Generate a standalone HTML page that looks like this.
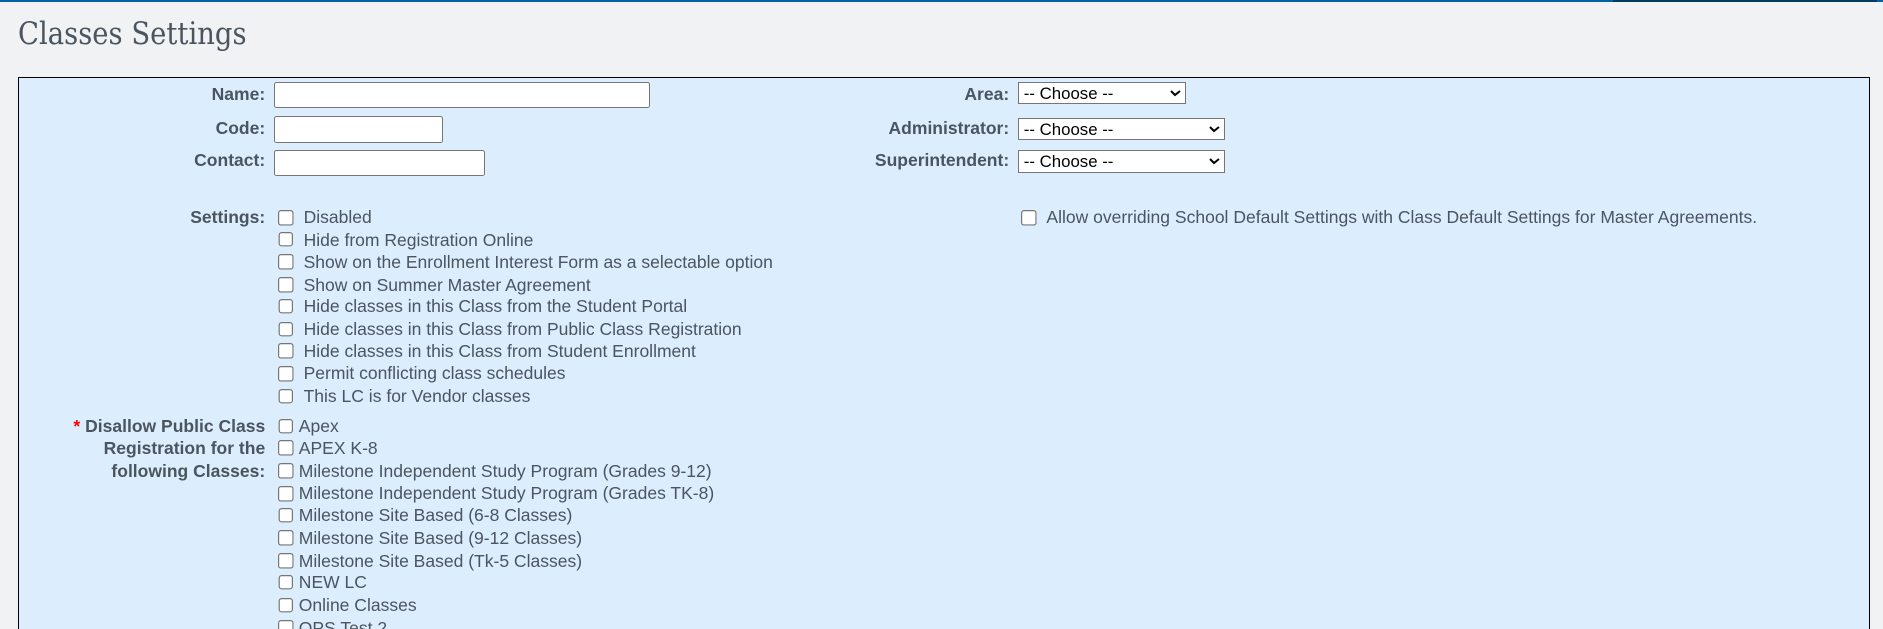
<!DOCTYPE html>
<html lang="en"><head><meta charset="utf-8"><title>Classes Settings</title>
<style>
html,body{margin:0;padding:0;width:1883px;height:628px;overflow:hidden;background:#f1f2f4}
#bar{position:absolute;left:0;top:0;width:1883px;height:2px;background:#0061a4}
#dark{position:absolute;left:1613px;top:0;width:264px;height:2px;background:#033a5c}
#z{position:absolute;left:0;top:0;width:1570px;height:524px;zoom:1.2;overflow:hidden;font:14.6px/18.6px "Liberation Sans",Arial,sans-serif;color:#4a5560}
#z>*{position:absolute}
h1{margin:0;left:15px;top:13px;font:400 26px/30px "DejaVu Serif",serif;color:#4a5560;transform-origin:0 0;transform:scaleX(.88);white-space:nowrap}
#panel{left:15px;top:64px;width:1542px;height:470px;border:1px solid #000;background:#dcedfe}
.l{left:11px;width:210px;text-align:right;font-weight:700;white-space:nowrap;margin-top:-.5px}
.m{margin-top:0}
.r{left:131px;width:710px;text-align:right}
input[type=text]{box-sizing:border-box;height:22px;margin:0;padding:0 2px;background:#fff;border:1px solid #767676;border-radius:2px}
select{box-sizing:border-box;height:19px;margin:0;font:14px "Liberation Sans",Arial,sans-serif;color:#000;background:#fff;border:1px solid #767676;border-radius:0;padding:0 0 0 1px}
input[type=checkbox]{margin:0;width:13px;height:13px}
.t{white-space:nowrap}
i{font-style:normal;color:#f00}
</style></head><body>
<div id="bar"></div><div id="dark"></div>
<div id="z">
<h1>Classes Settings</h1>
<div id="panel"></div>

<div class="l" style="top:70px">Name:</div>
<input type="text" style="left:228px;top:68px;width:314px">
<div class="l" style="top:98px">Code:</div>
<input type="text" style="left:228px;top:97px;width:141px">
<div class="l" style="top:125px">Contact:</div>
<input type="text" style="left:228px;top:125px;width:176px">

<div class="r l" style="top:70px">Area:</div>
<select style="left:848px;top:68px;width:140px"><option>-- Choose --</option></select>
<div class="r l" style="top:98px">Administrator:</div>
<select style="left:848px;top:98px;width:173px"><option>-- Choose --</option></select>
<div class="r l" style="top:125px">Superintendent:</div>
<select style="left:848px;top:125px;width:173px"><option>-- Choose --</option></select>

<div class="l m" style="top:172px">Settings:</div>
<input type="checkbox" style="left:232px;top:175px"><div class="t" style="left:253px;top:172px">Disabled</div>
<input type="checkbox" style="left:232px;top:193px"><div class="t" style="left:253px;top:190.5px">Hide from Registration Online</div>
<input type="checkbox" style="left:232px;top:212px"><div class="t" style="left:253px;top:209px">Show on the Enrollment Interest Form as a selectable option</div>
<input type="checkbox" style="left:232px;top:231px"><div class="t" style="left:253px;top:228px">Show on Summer Master Agreement</div>
<input type="checkbox" style="left:232px;top:249px"><div class="t" style="left:253px;top:246px">Hide classes in this Class from the Student Portal</div>
<input type="checkbox" style="left:232px;top:268px"><div class="t" style="left:253px;top:265px">Hide classes in this Class from Public Class Registration</div>
<input type="checkbox" style="left:232px;top:286px"><div class="t" style="left:253px;top:283.5px">Hide classes in this Class from Student Enrollment</div>
<input type="checkbox" style="left:232px;top:305px"><div class="t" style="left:253px;top:302px">Permit conflicting class schedules</div>
<input type="checkbox" style="left:232px;top:324px"><div class="t" style="left:253px;top:321px">This LC is for Vendor classes</div>

<input type="checkbox" style="left:851px;top:175px"><div class="t" style="left:872px;top:172px">Allow overriding School Default Settings with Class Default Settings for Master Agreements.</div>

<div class="l m" style="top:346px"><i>*</i> Disallow Public Class</div>
<div class="l m" style="top:364.5px">Registration for the</div>
<div class="l m" style="top:383px">following Classes:</div>
<input type="checkbox" style="left:232px;top:349px"><div class="t" style="left:249px;top:346px">Apex</div>
<input type="checkbox" style="left:232px;top:367px"><div class="t" style="left:249px;top:364.5px">APEX K-8</div>
<input type="checkbox" style="left:232px;top:386px"><div class="t" style="left:249px;top:383px">Milestone Independent Study Program (Grades 9-12)</div>
<input type="checkbox" style="left:232px;top:405px"><div class="t" style="left:249px;top:402px">Milestone Independent Study Program (Grades TK-8)</div>
<input type="checkbox" style="left:232px;top:423px"><div class="t" style="left:249px;top:420px">Milestone Site Based (6-8 Classes)</div>
<input type="checkbox" style="left:232px;top:442px"><div class="t" style="left:249px;top:439px">Milestone Site Based (9-12 Classes)</div>
<input type="checkbox" style="left:232px;top:461px"><div class="t" style="left:249px;top:458px">Milestone Site Based (Tk-5 Classes)</div>
<input type="checkbox" style="left:232px;top:479px"><div class="t" style="left:249px;top:476px">NEW LC</div>
<input type="checkbox" style="left:232px;top:498px"><div class="t" style="left:249px;top:495px">Online Classes</div>
<input type="checkbox" style="left:232px;top:517px"><div class="t" style="left:249px;top:514px">OPS Test 2</div>
</div>
</body></html>
